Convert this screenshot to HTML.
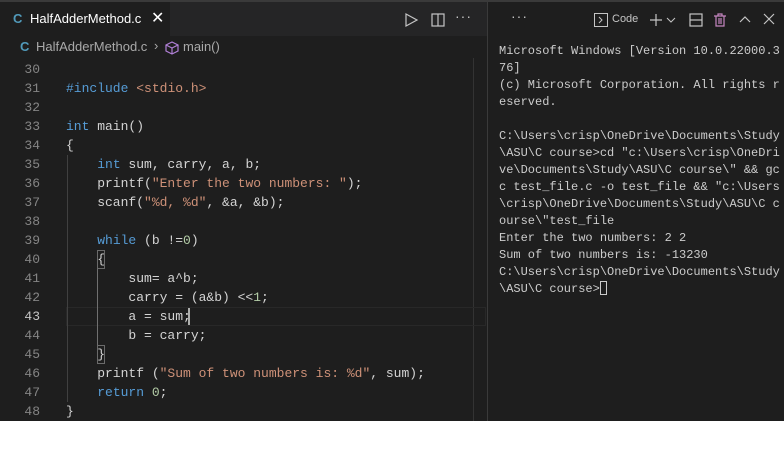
<!DOCTYPE html>
<html><head><style>
*{margin:0;padding:0;box-sizing:border-box}
body{width:784px;height:453px;background:#fff;position:relative;overflow:hidden;font-family:"Liberation Sans",sans-serif}
#bg{position:absolute;left:0;top:0;width:784px;height:421px;background:#2b2b2b}
#top{position:absolute;left:0;top:0;width:784px;height:2px;background:#3a3a3a}
#ed{position:absolute;left:0;top:2px;width:487px;height:419px;background:#1e1e1e}
#tabs{position:absolute;left:0;top:0;width:487px;height:34px;background:#252526}
#tab{position:absolute;left:0;top:0;width:170px;height:34px;background:#1e1e1e;color:#fff;font-size:13px}
#bc{position:absolute;left:0;top:34px;width:487px;height:22px;color:#a9a9a9;font-size:13px}
.code{position:absolute;top:58px;left:0;width:487px;font-family:"Liberation Mono",monospace;font-size:13px;line-height:19px;color:#d4d4d4;white-space:pre}
.ln{position:absolute;left:0;width:40px;text-align:right;color:#858585}
.tx{position:absolute;left:66px}
.k{color:#569cd6}.s{color:#ce9178}.n{color:#b5cea8}
#term{position:absolute;left:487px;top:2px;width:297px;height:419px;background:#1e1e1e;border-left:1px solid #3a3a3a}
#tt{position:absolute;left:11px;top:41px;font-family:"Liberation Mono",monospace;font-size:12px;line-height:17px;color:#cccccc;white-space:pre}
.ic{position:absolute;color:#c5c5c5}
</style></head><body>
<div id="bg"></div>
<div id="top"></div>
<div id="ed">
 <div id="tabs"><div id="tab"><span style="position:absolute;left:13px;top:9px;color:#519aba;font-weight:bold">C</span><span style="position:absolute;left:30px;top:9px">HalfAdderMethod.c</span><span style="position:absolute;left:151px;top:6px;font-size:16px">✕</span></div>
 <svg class="ic" style="left:403px;top:10px" width="16" height="16" viewBox="0 0 16 16"><path d="M3 2 L14 8 L3 14 Z" fill="none" stroke="#c5c5c5" stroke-width="1.2"/></svg>
 <svg class="ic" style="left:430px;top:10px" width="16" height="16" viewBox="0 0 16 16"><rect x="2" y="2" width="12" height="12" fill="none" stroke="#c5c5c5" stroke-width="1.2"/><path d="M8 2V14" stroke="#c5c5c5" stroke-width="1.2"/></svg>
 <span class="ic" style="left:455px;top:6px;font-size:14px;letter-spacing:1px">···</span>
 </div>
 <div id="bc"><span style="position:absolute;left:20px;top:3px;color:#519aba;font-weight:bold">C</span><span style="position:absolute;left:36px;top:3px">HalfAdderMethod.c</span><span style="position:absolute;left:154px;top:2px">›</span>
 <svg style="position:absolute;left:165px;top:5px" width="14" height="14" viewBox="0 0 14 14"><path d="M7 1L13 4V10L7 13L1 10V4Z M1 4L7 7L13 4 M7 7V13" fill="none" stroke="#b180d7" stroke-width="1.2"/></svg>
 <span style="position:absolute;left:183px;top:3px">main()</span></div>
 <div style="position:absolute;left:473px;top:56px;width:1px;height:363px;background:#333"></div>
 <div style="position:absolute;left:66px;top:305px;width:420px;height:19px;border:1px solid #282828"></div>
 <div style="position:absolute;left:67px;top:153px;width:1px;height:247px;background:#404040"></div>
 <div style="position:absolute;left:97px;top:267px;width:1px;height:76px;background:#707070"></div>
 <div style="position:absolute;left:97px;top:248px;width:8px;height:19px;border:1px solid #6b6b6b"></div>
 <div style="position:absolute;left:97px;top:343px;width:8px;height:19px;border:1px solid #6b6b6b"></div>
 <div style="position:absolute;left:188px;top:306px;width:1.5px;height:17px;background:#aeafad"></div>
 <div class="code">
<span class="ln" style="top:0">30</span>
<span class="ln" style="top:19px">31</span><span class="tx" style="top:19px"><span class="k">#include</span> <span class="s">&lt;stdio.h&gt;</span></span>
<span class="ln" style="top:38px">32</span>
<span class="ln" style="top:57px">33</span><span class="tx" style="top:57px"><span class="k">int</span> main()</span>
<span class="ln" style="top:76px">34</span><span class="tx" style="top:76px">{</span>
<span class="ln" style="top:95px">35</span><span class="tx" style="top:95px">    <span class="k">int</span> sum, carry, a, b;</span>
<span class="ln" style="top:114px">36</span><span class="tx" style="top:114px">    printf(<span class="s">"Enter the two numbers: "</span>);</span>
<span class="ln" style="top:133px">37</span><span class="tx" style="top:133px">    scanf(<span class="s">"%d, %d"</span>, &amp;a, &amp;b);</span>
<span class="ln" style="top:152px">38</span>
<span class="ln" style="top:171px">39</span><span class="tx" style="top:171px">    <span class="k">while</span> (b !=<span class="n">0</span>)</span>
<span class="ln" style="top:190px">40</span><span class="tx" style="top:190px">    {</span>
<span class="ln" style="top:209px">41</span><span class="tx" style="top:209px">        sum= a^b;</span>
<span class="ln" style="top:228px">42</span><span class="tx" style="top:228px">        carry = (a&amp;b) &lt;&lt;<span class="n">1</span>;</span>
<span class="ln" style="top:247px;color:#c6c6c6">43</span><span class="tx" style="top:247px">        a = sum;</span>
<span class="ln" style="top:266px">44</span><span class="tx" style="top:266px">        b = carry;</span>
<span class="ln" style="top:285px">45</span><span class="tx" style="top:285px">    }</span>
<span class="ln" style="top:304px">46</span><span class="tx" style="top:304px">    printf (<span class="s">"Sum of two numbers is: %d"</span>, sum);</span>
<span class="ln" style="top:323px">47</span><span class="tx" style="top:323px">    <span class="k">return</span> <span class="n">0</span>;</span>
<span class="ln" style="top:342px">48</span><span class="tx" style="top:342px">}</span>
 </div>
</div>
<div id="term">
 <span class="ic" style="left:23px;top:6px;font-size:14px;letter-spacing:1px">···</span>
 <svg style="position:absolute;left:106px;top:11px" width="14" height="14" viewBox="0 0 14 14"><rect x="0.5" y="0.5" width="13" height="13" fill="none" stroke="#c5c5c5"/><path d="M5 4L8 7L5 10" fill="none" stroke="#c5c5c5"/></svg>
 <span class="ic" style="left:124px;top:11px;font-size:11px">Code</span>
 <svg style="position:absolute;left:160px;top:10px" width="16" height="16" viewBox="0 0 16 16"><path d="M8 2V14M2 8H14" stroke="#c5c5c5" stroke-width="1.2"/></svg>
 <svg style="position:absolute;left:178px;top:14px" width="10" height="8" viewBox="0 0 10 8"><path d="M1 2L5 6L9 2" fill="none" stroke="#c5c5c5"/></svg>
 <svg style="position:absolute;left:200px;top:10px" width="16" height="16" viewBox="0 0 16 16"><rect x="2" y="2" width="12" height="12" fill="none" stroke="#c5c5c5" stroke-width="1.2"/><path d="M2 8H14" stroke="#c5c5c5" stroke-width="1.2"/></svg>
 <svg style="position:absolute;left:224px;top:10px" width="16" height="16" viewBox="0 0 16 16"><path d="M2 4H14M6 4V2H10V4M4 4V14H12V4M7 6V12M9 6V12" fill="none" stroke="#c586c0" stroke-width="1.2"/></svg>
 <svg style="position:absolute;left:250px;top:12px" width="14" height="10" viewBox="0 0 14 10"><path d="M2 8L7 3L12 8" fill="none" stroke="#c5c5c5" stroke-width="1.2"/></svg>
 <svg style="position:absolute;left:274px;top:10px" width="14" height="14" viewBox="0 0 14 14"><path d="M2 2L12 12M12 2L2 12" stroke="#c5c5c5" stroke-width="1.2"/></svg>
 <div id="tt">Microsoft Windows [Version 10.0.22000.3
76]
(c) Microsoft Corporation. All rights r
eserved.

C:\Users\crisp\OneDrive\Documents\Study
\ASU\C course&gt;cd "c:\Users\crisp\OneDri
ve\Documents\Study\ASU\C course\" &amp;&amp; gc
c test_file.c -o test_file &amp;&amp; "c:\Users
\crisp\OneDrive\Documents\Study\ASU\C c
ourse\"test_file
Enter the two numbers: 2 2
Sum of two numbers is: -13230
C:\Users\crisp\OneDrive\Documents\Study
\ASU\C course&gt;<span style="display:inline-block;width:7px;height:14px;border:1px solid #ccc;vertical-align:-3px"></span></div>
</div>
</body></html>
